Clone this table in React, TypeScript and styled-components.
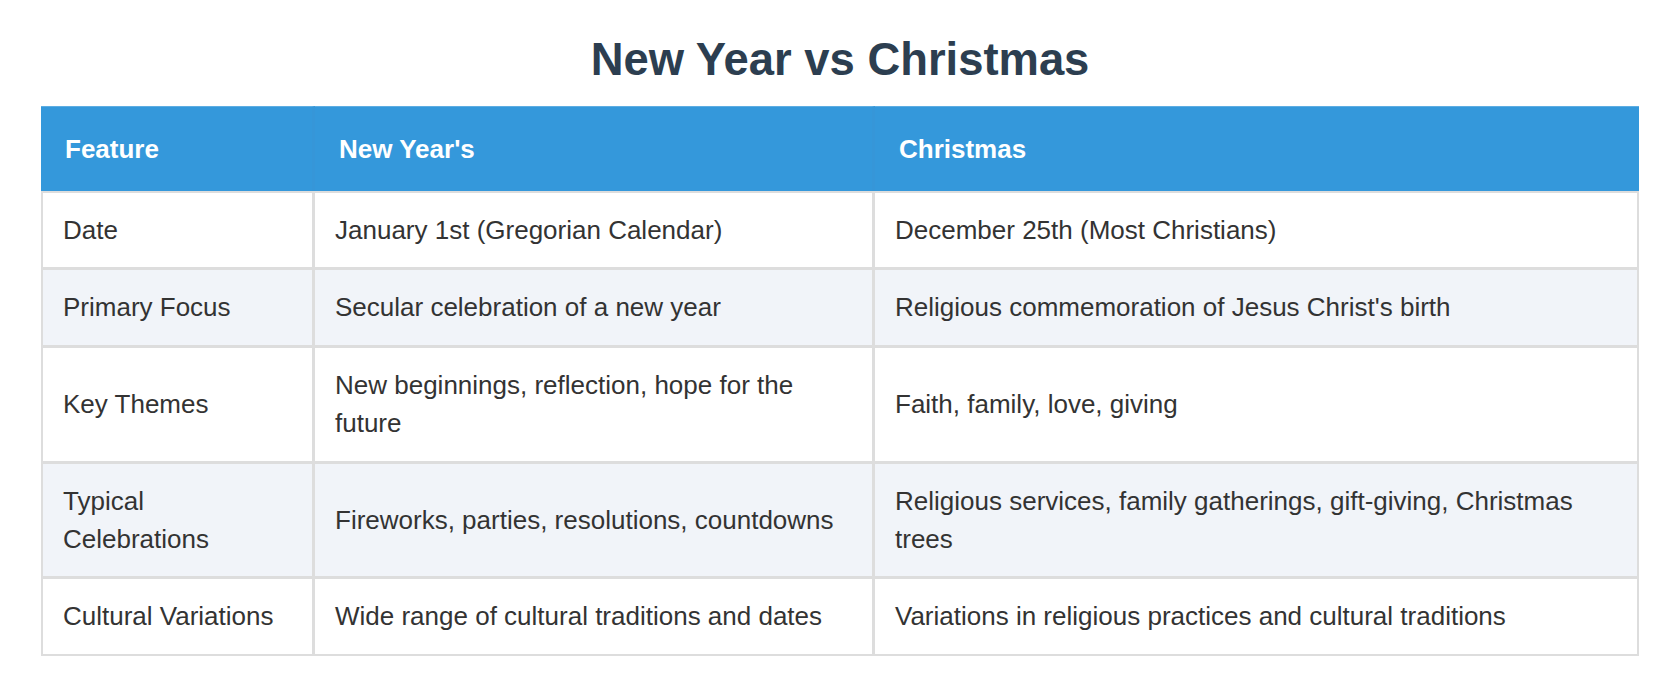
import styled, { createGlobalStyle } from "styled-components";

import type React from "react";

/* -----------------------------------------------
 * New Year vs Christmas 比較表
 * ----------------------------------------------- */

type Row = {
  feature: string;
  newYear: string;
  christmas: string;
};

const rows: Row[] = [
  {
    feature: "Date",
    newYear: "January 1st (Gregorian Calendar)",
    christmas: "December 25th (Most Christians)",
  },
  {
    feature: "Primary Focus",
    newYear: "Secular celebration of a new year",
    christmas: "Religious commemoration of Jesus Christ's birth",
  },
  {
    feature: "Key Themes",
    newYear: "New beginnings, reflection, hope for the future",
    christmas: "Faith, family, love, giving",
  },
  {
    feature: "Typical Celebrations",
    newYear: "Fireworks, parties, resolutions, countdowns",
    christmas: "Religious services, family gatherings, gift-giving, Christmas trees",
  },
  {
    feature: "Cultural Variations",
    newYear: "Wide range of cultural traditions and dates",
    christmas: "Variations in religious practices and cultural traditions",
  },
];

const GlobalStyle = createGlobalStyle`
  html, body {
    margin: 0;
    padding: 0;
    background: #ffffff;
  }
  body {
    font-family: "Liberation Sans", Arial, sans-serif;
    color: #333333;
  }
`;

const App: React.FC = () => {
  return (
    <>
      <GlobalStyle />
      <Page>
        <Title>New Year vs Christmas</Title>

        {/* 比較テーブル */}
        <Table>
          <colgroup>
            <col style={{ width: 274 }} />
            <col style={{ width: 560 }} />
            <col />
          </colgroup>
          <thead>
            <tr>
              <HeadCell>Feature</HeadCell>
              <HeadCell>New Year's</HeadCell>
              <HeadCell>Christmas</HeadCell>
            </tr>
          </thead>
          <tbody>
            {rows.map((row, i) => (
              <BodyRow key={row.feature} $striped={i % 2 === 1}>
                <Cell>{row.feature}</Cell>
                <Cell>{row.newYear}</Cell>
                <Cell>{row.christmas}</Cell>
              </BodyRow>
            ))}
          </tbody>
        </Table>
      </Page>
    </>
  );
};

const Page = styled.div`
  padding: 34px 41px 40px;
`;

const Title = styled.h1`
  margin: 0 0 21px;
  font-family: "Liberation Sans", Arial, sans-serif;
  font-size: 45.4px;
  font-weight: 700;
  line-height: 51px;
  text-align: center;
  color: #2c3e50;
`;

const Table = styled.table`
  width: 100%;
  table-layout: fixed;
  border-collapse: separate;
  border-spacing: 0;
  font-size: 26px;
`;

const HeadCell = styled.th`
  box-sizing: border-box;
  height: 85px;
  padding: 0 24px;
  background: #3498db;
  border-top: 1px solid #5dade2;
  border-right: 3px solid #3696d8;
  color: #ffffff;
  font-weight: 700;
  text-align: left;
  vertical-align: middle;
  line-height: 38.4px;

  &:last-child {
    border-right: none;
  }
`;

const BodyRow = styled.tr<{ $striped: boolean }>`
  background: ${({ $striped }) => ($striped ? "#f1f4f9" : "#ffffff")};

  &:first-child > td {
    border-top: 2px solid #dddddd;
  }
  &:last-child > td {
    border-bottom-width: 2px;
  }
`;

const Cell = styled.td`
  box-sizing: border-box;
  padding: 18px 20px;
  border-right: 3px solid #dddddd;
  border-bottom: 3px solid #dddddd;
  line-height: 38.4px;
  vertical-align: middle;
  color: #333333;

  &:first-child {
    border-left: 2px solid #dddddd;
  }
  &:last-child {
    border-right-width: 2px;
  }
`;

export default App;
